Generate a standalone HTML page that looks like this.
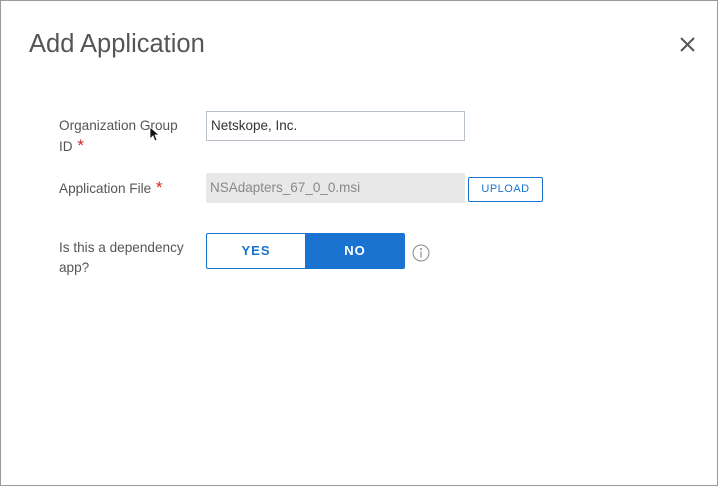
<!DOCTYPE html><html><head><style>
body{margin:0;width:718px;height:486px;overflow:hidden;background:#fff;font-family:"Liberation Sans",sans-serif;}
.frame{position:absolute;left:0;top:0;width:716px;height:484px;border:1px solid #9a9a9a;}
.a{position:absolute;}
.lbl{font-size:13.6px;color:#555;line-height:20px;}
.st{color:#d0271d;font-size:17px;}
</style></head><body><div class="frame"></div>
<div class="a" style="left:29px;top:30px;font-size:25.5px;color:#555;">Add Application</div>
<svg class="a" style="left:680px;top:37px" width="15" height="15"><path d="M1 1L14 14M14 1L1 14" stroke="#555" stroke-width="2"/></svg>
<div class="a lbl" style="left:59px;top:116px;width:140px;">Organization Group<br>ID<span class="st"> *</span></div>
<div class="a" style="left:206px;top:111px;width:257px;height:28px;border:1px solid #b8c2cc;font-size:13.5px;color:#333;line-height:28px;text-indent:4px;">Netskope, Inc.</div>
<div class="a lbl" style="left:59px;top:178px;">Application File<span class="st"> *</span></div>
<div class="a" style="left:206px;top:173px;width:259px;height:30px;background:#e8e8e8;font-size:13.5px;color:#888;line-height:30px;text-indent:4px;">NSAdapters_67_0_0.msi</div>
<div class="a" style="left:468px;top:177px;width:73px;height:23px;border:1px solid #1a73d0;border-radius:2px;color:#1a73d0;font-size:11px;letter-spacing:.5px;text-align:center;line-height:23px;">UPLOAD</div>
<div class="a lbl" style="left:59px;top:238px;">Is this a dependency<br>app?</div>
<div class="a" style="left:206px;top:233px;width:98px;height:34px;border:1px solid #1a73d0;border-right:none;border-radius:2px 0 0 2px;color:#1a73d0;font-size:13px;font-weight:bold;letter-spacing:1px;text-align:center;line-height:34px;">YES</div>
<div class="a" style="left:305px;top:233px;width:100px;height:36px;background:#1a73d0;border-radius:0 2px 2px 0;color:#fff;font-size:13px;font-weight:bold;letter-spacing:1px;text-align:center;line-height:36px;">NO</div>
<svg class="a" style="left:411px;top:243px" width="20" height="20"><circle cx="10" cy="10" r="8" fill="none" stroke="#888" stroke-width="1"/><circle cx="10" cy="6" r="1" fill="#888"/><path d="M10 8.5V14.5" stroke="#888" stroke-width="1.2"/></svg>
<svg class="a" style="left:149px;top:126px" width="10" height="16"><path d="M1 1L1 13L4 10L6 15L8 14L6 9L10 9Z" fill="#111" stroke="#fff" stroke-width=".8"/></svg>
</body></html>
